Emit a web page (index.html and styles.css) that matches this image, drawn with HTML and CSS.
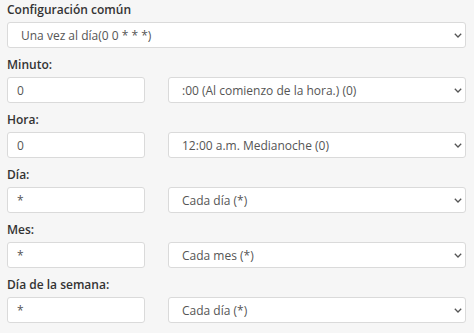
FILE: index.html
```html
<!DOCTYPE html>
<html lang="es">
<head>
<meta charset="utf-8">
<title>Configuración cron</title>
<link rel="stylesheet" href="styles.css">
</head>
<body>
<form class="cron">
  <div class="field">
    <label class="label">Configuración común</label>
    <div class="select-wrap">
      <select class="control select"><option>Una vez al día(0 0 * * *)</option></select>
      <svg class="chev" viewBox="0 0 8 5" width="8" height="5"><path d="M0.8 0.8 L4 4 L7.2 0.8" fill="none" stroke="#555" stroke-width="1.3"/></svg>
    </div>
  </div>
  <div class="field">
    <label class="label">Minuto:</label>
    <div class="pair">
      <input class="control input" type="text" value="0">
      <div class="select-wrap">
        <select class="control select"><option>:00 (Al comienzo de la hora.) (0)</option></select>
        <svg class="chev" viewBox="0 0 8 5" width="8" height="5"><path d="M0.8 0.8 L4 4 L7.2 0.8" fill="none" stroke="#555" stroke-width="1.3"/></svg>
      </div>
    </div>
  </div>
  <div class="field">
    <label class="label">Hora:</label>
    <div class="pair">
      <input class="control input" type="text" value="0">
      <div class="select-wrap">
        <select class="control select"><option>12:00 a.m. Medianoche (0)</option></select>
        <svg class="chev" viewBox="0 0 8 5" width="8" height="5"><path d="M0.8 0.8 L4 4 L7.2 0.8" fill="none" stroke="#555" stroke-width="1.3"/></svg>
      </div>
    </div>
  </div>
  <div class="field">
    <label class="label">Día:</label>
    <div class="pair">
      <input class="control input" type="text" value="*">
      <div class="select-wrap">
        <select class="control select"><option>Cada día (*)</option></select>
        <svg class="chev" viewBox="0 0 8 5" width="8" height="5"><path d="M0.8 0.8 L4 4 L7.2 0.8" fill="none" stroke="#555" stroke-width="1.3"/></svg>
      </div>
    </div>
  </div>
  <div class="field">
    <label class="label">Mes:</label>
    <div class="pair">
      <input class="control input" type="text" value="*">
      <div class="select-wrap">
        <select class="control select"><option>Cada mes (*)</option></select>
        <svg class="chev" viewBox="0 0 8 5" width="8" height="5"><path d="M0.8 0.8 L4 4 L7.2 0.8" fill="none" stroke="#555" stroke-width="1.3"/></svg>
      </div>
    </div>
  </div>
  <div class="field">
    <label class="label">Día de la semana:</label>
    <div class="pair">
      <input class="control input" type="text" value="*">
      <div class="select-wrap">
        <select class="control select"><option>Cada día (*)</option></select>
        <svg class="chev" viewBox="0 0 8 5" width="8" height="5"><path d="M0.8 0.8 L4 4 L7.2 0.8" fill="none" stroke="#555" stroke-width="1.3"/></svg>
      </div>
    </div>
  </div>
</form>
</body>
</html>
```
FILE: styles.css
```css
html, body {
  margin: 0;
  padding: 0;
  background: #f6f6f6;
}
body {
  font-family: "Open Sans", "Noto Sans", sans-serif;
  color: #333;
}
.cron {
  padding: 0 8px 0 7px;
}
.field {
  margin-bottom: 7px;
}
.label {
  display: block;
  font-size: 12px;
  font-weight: 600;
  line-height: 18px;
  padding-top: 1px;
  color: #333;
  margin-bottom: 3px;
}
.pair {
  display: grid;
  grid-template-columns: 138px 1fr;
  column-gap: 23px;
}
.control {
  box-sizing: border-box;
  display: block;
  width: 100%;
  height: 26px;
  margin: 0;
  border: 1px solid #dadada;
  border-radius: 3px;
  background: #fff;
  font-family: "Open Sans", "Noto Sans", sans-serif;
  font-size: 12px;
  color: #555;
  outline: none;
}
.input {
  padding: 0 9px;
}
.select {
  -webkit-appearance: none;
  appearance: none;
  padding: 0 24px 0 13px;
}
.select-wrap {
  position: relative;
}
.chev {
  position: absolute;
  right: 4px;
  top: 11px;
  pointer-events: none;
}
```
